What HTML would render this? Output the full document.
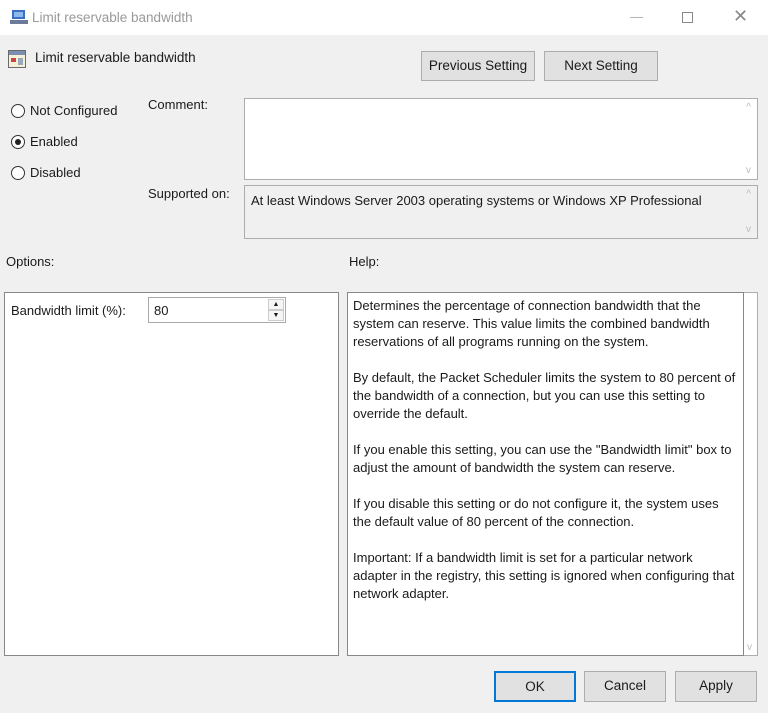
<!DOCTYPE html>
<html><head><style>
*{box-sizing:border-box}
body{margin:0;width:768px;height:713px;background:#f0f0f0;font-family:"Liberation Sans",sans-serif;font-size:13px;color:#1a1a1a;position:relative;overflow:hidden}
.a{position:absolute}
.btn{position:absolute;background:#e1e1e1;border:1px solid #adadad;text-align:center;line-height:28px;font-size:13.5px}
.box{position:absolute;background:#fff;border:1px solid #adadad}
.rad{position:absolute;left:11px;width:14px;height:14px;border:1px solid #333;border-radius:50%;background:#fff}
.t{position:absolute;white-space:nowrap}
p{margin:0 0 18px 0}
</style></head><body>
<div class="a" style="left:0;top:0;width:768px;height:35px;background:#fff"></div>
<svg class="a" style="left:10px;top:8px" width="18" height="18"><rect x="2" y="2" width="13" height="9" fill="#3a6fc4"/><rect x="4" y="4" width="9" height="5" fill="#8cb8ee"/><rect x="0" y="12" width="18" height="4" fill="#6b7b99"/></svg>
<div class="t" style="left:32px;top:10px;color:#999;font-size:13.5px">Limit reservable bandwidth</div>
<div class="t" style="left:630px;top:9px;color:#aaa">—</div>
<div class="a" style="left:682px;top:12px;width:11px;height:11px;border:1px solid #888"></div>
<div class="t" style="left:733px;top:6px;color:#888;font-size:18px">✕</div>
<svg class="a" style="left:8px;top:50px" width="18" height="18"><rect x="0.5" y="0.5" width="17" height="17" fill="#f7f0d8" stroke="#6a6a6a"/><rect x="1" y="1" width="16" height="4" fill="#7a8fb0"/><rect x="3" y="8" width="5" height="4" fill="#c44"/><rect x="10" y="8" width="5" height="7" fill="#9ab"/></svg>
<div class="t" style="left:35px;top:50px;font-size:13.5px">Limit reservable bandwidth</div>
<div class="btn" style="left:421px;top:51px;width:114px;height:30px">Previous Setting</div>
<div class="btn" style="left:544px;top:51px;width:114px;height:30px">Next Setting</div>
<div class="rad" style="top:104px"></div>
<div class="rad" style="top:135px"><div class="a" style="left:3px;top:3px;width:6px;height:6px;border-radius:50%;background:#222"></div></div>
<div class="rad" style="top:166px"></div>
<div class="t" style="left:30px;top:103px">Not Configured</div>
<div class="t" style="left:30px;top:134px">Enabled</div>
<div class="t" style="left:30px;top:165px">Disabled</div>
<div class="t" style="left:148px;top:97px">Comment:</div>
<div class="t" style="left:148px;top:186px">Supported on:</div>
<div class="box" style="left:244px;top:98px;width:514px;height:82px"><div class="t" style="right:6px;top:3px;color:#bbb;font-size:10px">^</div><div class="t" style="right:6px;bottom:3px;color:#bbb;font-size:10px">v</div></div>
<div class="box" style="left:244px;top:185px;width:514px;height:54px;background:#f0f0f0"><div class="t" style="left:6px;top:7px">At least Windows Server 2003 operating systems or Windows XP Professional</div><div class="t" style="right:6px;top:3px;color:#bbb;font-size:10px">^</div><div class="t" style="right:6px;bottom:3px;color:#bbb;font-size:10px">v</div></div>
<div class="t" style="left:6px;top:254px">Options:</div>
<div class="t" style="left:349px;top:254px">Help:</div>
<div class="box" style="left:4px;top:292px;width:335px;height:364px;border-color:#888">
<div class="t" style="left:6px;top:10px">Bandwidth limit (%):</div>
<div class="box" style="left:143px;top:4px;width:138px;height:26px;border-color:#aaa"><div class="t" style="left:5px;top:5px">80</div>
<div class="a" style="right:1px;top:1px;width:16px;height:11px;border:1px solid #ccc;font-size:7px;text-align:center;line-height:9px;background:#f5f5f5">▲</div>
<div class="a" style="right:1px;top:12px;width:16px;height:11px;border:1px solid #ccc;font-size:7px;text-align:center;line-height:9px;background:#f5f5f5">▼</div></div>
</div>
<div class="box" style="left:347px;top:292px;width:397px;height:364px;border-color:#888;padding:4px 5px;line-height:18px">
<p>Determines the percentage of connection bandwidth that the system can reserve. This value limits the combined bandwidth reservations of all programs running on the system.</p>
<p>By default, the Packet Scheduler limits the system to 80 percent of the bandwidth of a connection, but you can use this setting to override the default.</p>
<p>If you enable this setting, you can use the "Bandwidth limit" box to adjust the amount of bandwidth the system can reserve.</p>
<p>If you disable this setting or do not configure it, the system uses the default value of 80 percent of the connection.</p>
<p>Important: If a bandwidth limit is set for a particular network adapter in the registry, this setting is ignored when configuring that network adapter.</p>
</div>
<div class="a" style="left:744px;top:292px;width:14px;height:364px;background:#fff;border-top:1px solid #adadad;border-right:1px solid #adadad;border-bottom:1px solid #adadad"><div class="t" style="left:3px;bottom:2px;color:#bbb;font-size:10px">v</div></div>
<div class="btn" style="left:494px;top:671px;width:82px;height:31px;border:2px solid #0078d7;line-height:27px">OK</div>
<div class="btn" style="left:584px;top:671px;width:82px;height:31px">Cancel</div>
<div class="btn" style="left:675px;top:671px;width:82px;height:31px">Apply</div>
</body></html>
